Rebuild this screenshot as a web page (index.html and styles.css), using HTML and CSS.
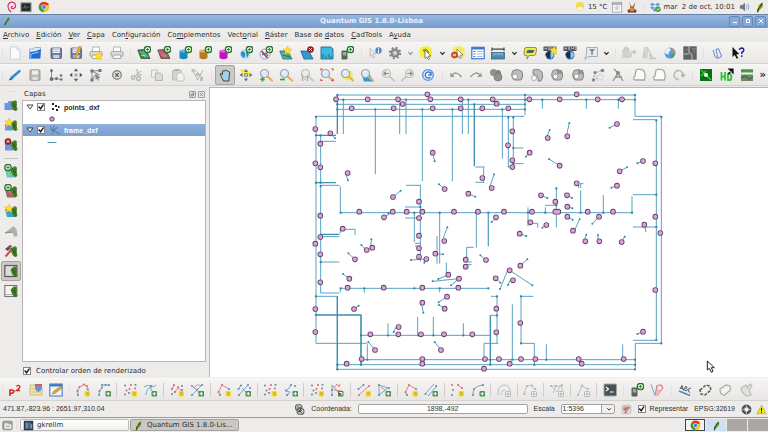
FILE: index.html
```html
<!DOCTYPE html>
<html lang="es">
<head>
<meta charset="utf-8">
<title>Quantum GIS 1.8.0-Lisboa</title>
<link rel="stylesheet" href="styles.css">
</head>
<body>
<svg class="defs" aria-hidden="true">
  <defs>
    <!-- badges -->
    <g id="plus"><circle cx="10.5" cy="3.5" r="3.2" fill="#e9f5e4" stroke="#2b702c" stroke-width="1.3"/><path d="M10.5 1.8v3.4M8.8 3.5h3.4" stroke="#3a8f3c" stroke-width="1.1"/></g>
    <g id="star"><path d="M7 0l1.3 2.9 3.2.3-2.4 2.1.8 3.1L7 6.8 4.1 8.4l.8-3.1L2.500 3.200l3.200-.3z" fill="#fde12a" stroke="#e3b318" stroke-width=".5"/></g>
    <g id="kill"><circle cx="10.5" cy="3.5" r="3.3" fill="#9a1c1c"/><path d="M9.200 2.200l2.600 2.600M11.800 2.200L9.200 4.800" stroke="#fff" stroke-width="1"/></g>
    <g id="bs"><rect x="8.5" y="8" width="5.500" height="5.500" rx="1" fill="#f4dd25"/><path d="M12.500 9.500h-2v1.300h2v1.400h-2.200" fill="none" stroke="#c9a812" stroke-width=".8"/></g>
    <g id="bp"><rect x="8.5" y="8" width="5.500" height="5.500" rx="1" fill="#4b8f54"/><path d="M11.250 9v3.500M9.500 10.750H13" stroke="#fff" stroke-width="1"/></g>
    <g id="bg"><rect x="8.5" y="8.500" width="5" height="5" rx="1" fill="#f0f0ee" stroke="#aaa" stroke-width=".8"/><path d="M11 9.700v2.600M9.700 11h2.600" stroke="#999" stroke-width=".8"/></g>
    <g id="leaf"><path d="M9 3q3-2 4 1l-.5 3 1 5q-3 2-5-1L6.500 6z" fill="#4a842c"/><path d="M8 4l4 9M11 4l-1 5M12.500 6l-2 4" stroke="#2c5a1a" stroke-width=".8"/></g>
    <g id="lens"><path d="M8.500 8.500l4.500 4" stroke="#e3ad5c" stroke-width="2.200" stroke-linecap="round"/><circle cx="5.500" cy="5.500" r="4" fill="#dfe9f3" stroke="#98a4b2" stroke-width="1.200"/><path d="M3.500 5q.5-2 2.500-2" stroke="#fff" fill="none"/></g>
    <g id="lensg"><path d="M8.500 8.500l4.500 4" stroke="#c9c8c5" stroke-width="2" stroke-linecap="round"/><circle cx="5.500" cy="5.500" r="4" fill="#ececea" stroke="#bdbcb9" stroke-width="1.200"/></g>

    <!-- desktop -->
    <symbol id="debian" viewBox="0 0 14 14"><path d="M8 6.500q-2-.5-1.800 1.200Q6.700 9.500 9 8.800 11.800 7.500 11 4.500 9.800 1.200 6.500 1.300 2.500 2 2.300 6.500q.3 4 3.700 6.500" fill="none" stroke="#d7346b" stroke-width="1.400"/></symbol>
    <symbol id="term" viewBox="0 0 14 14"><rect x=".5" y="1.500" width="13" height="11.500" fill="#8d8f8c"/><rect x="1.800" y="2.800" width="10.400" height="8.700" fill="#1f2a26"/><path d="M3 8h2l.8-3L7 9l1-2h3" stroke="#79907f" stroke-width=".7" fill="none"/></symbol>
    <symbol id="chrome" viewBox="0 0 14 14"><circle cx="7" cy="7" r="6.200" fill="#f2c51d"/><path d="M7 7L1.600 3.900A6.200 6.200 0 0 1 12.400 3.900z" fill="#dc3b2b"/><path d="M7 7L1.600 3.900A6.200 6.200 0 0 0 6.500 13.200z" fill="#35a04a"/><path d="M4 2.500h8l.4 1.800H7z" fill="#dc3b2b"/><circle cx="7" cy="7" r="2.900" fill="#fff"/><circle cx="7" cy="7" r="2.200" fill="#3f7edb"/></symbol>
    <symbol id="weather" viewBox="0 0 14 14"><circle cx="7" cy="6" r="4.800" fill="#f7dc3c"/><path d="M3 9q0-2.500 2.500-2 1-1.500 3 0 3-.5 3 2.500-1 2-4 2Q3 11.500 3 9z" fill="#f4f4f0" stroke="#d3cfae" stroke-width=".6"/></symbol>
    <symbol id="cal" viewBox="0 0 14 14"><rect x="1.500" y="1.500" width="11" height="11.500" fill="#f4f6f8" stroke="#8a939c" stroke-width=".8"/><path d="M1.500 3.500h11" stroke="#8a939c" stroke-width="1.500"/><path d="M4 10l6-4M7 5v6M4 7l5 3" stroke="#a8b4c0" stroke-width=".8"/></symbol>
    <symbol id="gnu" viewBox="0 0 14 14"><path d="M4 1l2 5h2l3-5-1.500 6 .5 4H4l1-4z" fill="#9b6a3c"/><path d="M2 10h10v3.500H2z" fill="#6c4124"/><path d="M5.500 8h3l1 4h-5z" fill="#e5884a"/></symbol>
    <symbol id="dropbox" viewBox="0 0 14 14"><path d="M4 2l3 2-3 2-3-2zM10 2l3 2-3 2-3-2zM4 6l3 2-3 2-3-2zM10 6l3 2-3 2-3-2zM7 8.500l3 2-3 2-3-2z" fill="#5aa3dc"/><circle cx="10.500" cy="9.500" r="3.200" fill="#3fa148"/><path d="M9 9.500l1.200 1.200 2-2.400" fill="none" stroke="#fff"/></symbol>
    <symbol id="sound" viewBox="0 0 14 14"><path d="M1 5h2.500L7 2v10L3.500 9H1z" fill="#777"/><path d="M8.500 4.500q1.500 2.500 0 5M10.300 3q2.500 4 0 8" stroke="#7fa3cc" fill="none"/></symbol>
    <symbol id="qgis" viewBox="0 0 14 14"><path d="M4 13Q3 6 10 1.500q1.500 5-2 7.500-2 1-3 4z" fill="#6c9a2c"/><path d="M4 13q1-6 5.500-10" stroke="#274b14" stroke-width="1.300" fill="none"/><path d="M6 4l-1 4" stroke="#e5c72e" stroke-width="1.200"/></symbol>

    <!-- file -->
    <symbol id="new" viewBox="0 0 14 14"><path d="M2.500.8h6.500l3 3v9.400h-9.500z" fill="#fbfbfd" stroke="#c6c8d4" stroke-width=".8"/><path d="M9 .8v3h3" fill="#dfe2ec" stroke="#c6c8d4" stroke-width=".7"/></symbol>
    <symbol id="open" viewBox="0 0 14 14"><path d="M1.500 5V3h4l1-1.500h6V12h-11z" fill="#dce9f7" stroke="#7aa2d6" stroke-width=".7"/><path d="M1.500 12.500l.5-6.500 6-1 5-2-1 9.500z" fill="#1f6ad6"/><path d="M2.500 12l.5-4 8-2" stroke="#8fc2f5" stroke-width="1.200" fill="none"/></symbol>
    <symbol id="save" viewBox="0 0 14 14"><rect x="2" y="2" width="10.500" height="10.500" rx="1" fill="#6b7ba4" stroke="#4b577a" stroke-width=".8"/><path d="M3.500 2.300h7.500v4.700H3.500z" fill="#eef0f5"/><path d="M3.800 3.800h7M3.800 5.500h7" stroke="#aab3c7" stroke-width=".7"/><path d="M4.300 9h6v3.300h-6z" fill="#ccd2de"/></symbol>
    <symbol id="saveas" viewBox="0 0 14 14"><use href="#save"/><path d="M10.500 0l2 1-5 10-2 1.500.3-2.500z" fill="#f4b32c" stroke="#a36b13" stroke-width=".5"/></symbol>
    <symbol id="print" viewBox="0 0 14 14"><path d="M3.500 6V1h7v5" fill="#fff" stroke="#a5a5a5" stroke-width=".8"/><rect x="1" y="5.500" width="12" height="5" rx="1.500" fill="#dcdcda" stroke="#979795" stroke-width=".8"/><path d="M3.200 9h7.600v3.500H3.200z" fill="#f7f7f7" stroke="#8b8b8b" stroke-width=".7"/></symbol>
    <symbol id="printnew" viewBox="0 0 14 14"><use href="#print"/><use href="#star" x="2.500" y="5.500"/></symbol>

    <!-- layers -->
    <symbol id="addvec" viewBox="0 0 14 14"><path d="M.8 4l8-.5 4.200 9H4z" fill="#3f8a3a" stroke="#33503a" stroke-width=".8"/><path d="M2.500 5.500l4 2 1.500 4M6 5l5 6.500" stroke="#4fb8e0" stroke-width="1.200" fill="none"/><path d="M4 9l5 1" stroke="#d7e64c"/><use href="#plus"/></symbol>
    <symbol id="addras" viewBox="0 0 14 14"><path d="M.8 4l8-.5 4.200 9H4z" fill="#a25a5a" stroke="#5b4040" stroke-width=".8"/><path d="M2 5l6 7M4 4.500l6 7" stroke="#e85a7e" stroke-width="1.200"/><path d="M4 9l6 1" stroke="#61b26d" stroke-width="1.300"/><use href="#plus"/></symbol>
    <symbol id="addpg" viewBox="0 0 14 14"><path d="M1.500 5v7q4 2.500 8 0V5z" fill="#1d86c2"/><ellipse cx="5.500" cy="5" rx="4" ry="1.500" fill="#5fb6e2"/><use href="#plus"/></symbol>
    <symbol id="addsl" viewBox="0 0 14 14"><path d="M1.500 5v7q4 2.500 8 0V5z" fill="#b87a1c"/><ellipse cx="5.500" cy="5" rx="4" ry="1.500" fill="#e3ad52"/><use href="#plus"/></symbol>
    <symbol id="addms" viewBox="0 0 14 14"><path d="M1.500 5v7q4 2.500 8 0V5z" fill="#c012c4"/><ellipse cx="5.500" cy="5" rx="4" ry="1.500" fill="#e75eea"/><use href="#plus"/></symbol>
    <symbol id="addwms" viewBox="0 0 14 14"><circle cx="6" cy="8" r="5" fill="#b9dcf2"/><path d="M2 6q3-2 4 1t-1 5q-4-2-3-6z" fill="#2f8fd0"/><path d="M7 6l3 2-2 4z" fill="#2a7dbc"/><use href="#plus"/></symbol>
    <symbol id="addwfs" viewBox="0 0 14 14"><circle cx="6" cy="8" r="5" fill="#eef2fb" stroke="#8c8fd0" stroke-width=".8"/><path d="M2.500 5l6 7" stroke="#dd2d2d" stroke-width="1.800"/><path d="M3 9l4-2 2 3" stroke="#4164c9" stroke-width="1.200" fill="none"/><use href="#plus"/></symbol>
    <symbol id="newshp" viewBox="0 0 14 14"><path d="M.8 5h8l4.200 8H4z" fill="#45b3c0" stroke="#2a6a5a" stroke-width=".8"/><path d="M4 9l7 2" stroke="#2f8a34" stroke-width="1.500"/><use href="#star" x="1.500"/></symbol>
    <symbol id="dellay" viewBox="0 0 14 14"><path d="M.8 5h8l4.200 8H4z" fill="#2b9bd0" stroke="#1f5f85" stroke-width=".8"/><use href="#kill"/></symbol>
    <symbol id="gps" viewBox="0 0 14 14"><path d="M1 1h10l2 2v10H1z" fill="#3cbbe2" stroke="#2a6a84" stroke-width=".9"/><path d="M3 8v4M6 9.500v3M9 8v4M11 10v3" stroke="#1c617d" stroke-width=".9"/></symbol>
    <symbol id="addgps" viewBox="0 0 14 14"><rect x="1.500" y="4.500" width="6" height="9" rx="1" fill="#5a615c"/><rect x="2.800" y="6" width="3.400" height="3.500" fill="#8ab58d"/><use href="#plus"/></symbol>

    <!-- attributes -->
    <symbol id="ident" viewBox="0 0 14 14"><path d="M2 2l6 6-3 .3 1.600 3-1.500.8L3.500 9 2 10.500z" fill="#e5e5e3" stroke="#aaa" stroke-width=".6"/><circle cx="10.500" cy="4.500" r="3.200" fill="#4d88cc"/><path d="M10.500 4v3M10.500 2.200v1" stroke="#fff" stroke-width="1.200"/></symbol>
    <symbol id="gear" viewBox="0 0 14 14"><circle cx="7" cy="7" r="4" fill="#9d9d9b" stroke="#7a7a78" stroke-width="1"/><circle cx="7" cy="7" r="5.200" fill="none" stroke="#858585" stroke-width="2" stroke-dasharray="2 2.080"/><circle cx="7" cy="7" r="1.500" fill="#eceae8"/></symbol>
    <symbol id="chev" viewBox="0 0 8 14"><path d="M1.500 6l2.500 2.500L6.500 6" fill="none" stroke="currentColor" stroke-width="1.400"/></symbol>
    <symbol id="select" viewBox="0 0 14 14"><path d="M1 2q6-4 11 0 2 5 0 9-6 3-11-1-1-4 0-8z" fill="#f5ee3d"/><path d="M4 4l3-1 3 3-3 2z" fill="#b9b88c" stroke="#77774c" stroke-width=".8"/><path d="M6 4l6 6-3 .2 1.500 2.500-1.300.8L7.700 11 6 12.300z" fill="#fff" stroke="#666" stroke-width=".8"/></symbol>
    <symbol id="desel" viewBox="0 0 14 14"><path d="M2 2q6-4 11 0 1.500 5 0 9-6 3-11-1-1-4 0-8z" fill="#f5ee5a"/><path d="M6 3l6 6-3 .2 1.500 2.500-1.300.8L7.700 10 6 11.300z" fill="#fff" stroke="#777" stroke-width=".8"/><circle cx="3.500" cy="9" r="3" fill="#e3581e" stroke="#b02b14" stroke-width=".8"/><path d="M2 9h3" stroke="#fff" stroke-width="1.200"/></symbol>
    <symbol id="table" viewBox="0 0 14 14"><rect x=".8" y="1.300" width="12.400" height="11.400" fill="#fff" stroke="#3c77d0" stroke-width="1.200"/><path d="M1 2.500h12" stroke="#3c77d0" stroke-width="2"/><path d="M2.500 5.500h2M2.500 8h2M2.500 10.500h2" stroke="#3c77d0" stroke-width="1.200"/><path d="M6 5.500h5.500M6 8h5.500M6 10.500h5.500" stroke="#9ab1d8" stroke-width=".9"/></symbol>
    <symbol id="measure" viewBox="0 0 14 14"><path d="M1 1.500v3.500M13 1.500v3.500M1 3.200h12" stroke="#444" stroke-width="1.200"/><rect x=".5" y="6.500" width="13" height="6.500" fill="#4b89ae" stroke="#2e5a78" stroke-width=".7"/><path d="M3 7v2.500M5 7v2M7 7v2.500M9 7v2M11 7v2.500" stroke="#d4e6f0" stroke-width=".7"/></symbol>
    <symbol id="tip" viewBox="0 0 14 14"><path d="M3 1.500h9q2 0 1.500 2.500l-.8 4q-.5 1.500-2 1.500H6l-2 3.500V9.500H2.500Q.8 9.500 1 8l.5-4.500Q1.700 1.500 3 1.500z" fill="#f2ea55" stroke="#7c7940" stroke-width=".8"/><path d="M4.500 4h7l-1.500 3H3.300z" fill="#3f6f48"/></symbol>
    <symbol id="bm" viewBox="0 0 14 14"><path d="M.5.5h13v4.500H.5z" fill="#4d5053"/><path d="M2 1.500v2M2 2.500h1.500M3.500 1.500v2M5.500 1.500h1.300v2H5.500zM8.500 3.500v-2l1 1 1-1v2M13 1.500h-1v2h1" stroke="#ddd" stroke-width=".6" fill="none"/><circle cx="7" cy="9" r="4.500" fill="#3f7db8"/><path d="M7 5v8q-3.500-1-4.500-4.500 1-3 4.500-3.500z" fill="#1d2f47"/><path d="M8 6q3.500 1 2.500 4l-2.500 2.500z" fill="#a9c6dc"/></symbol>
    <symbol id="bmnew" viewBox="0 0 14 14"><use href="#bm"/><use href="#star" x="4"/></symbol>
    <symbol id="text" viewBox="0 0 14 14"><path d="M2.500 1.500h11v9H5L.8 13.200l1.700-5z" fill="#e4ebf1" stroke="#9aa8b4" stroke-width=".9"/><path d="M5.500 3.800h5M8 3.800v5" stroke="#5e6b77" stroke-width="1.300"/></symbol>
    <symbol id="g1" viewBox="0 0 14 14"><path d="M1 12V5l2-3v10M5 12V1l2 4v7M9 6h4M11.500 4l2 2-2 2M9 11V7" stroke="#c3c2bf" stroke-width="1.300" fill="none"/></symbol>
    <symbol id="g2" viewBox="0 0 14 14"><path d="M1 12.500L3 1v11.500M5 12V1l6 11.500M8 6v6.500h6" stroke="#c9c8c5" stroke-width="1.300" fill="none"/></symbol>
    <symbol id="globe" viewBox="0 0 14 14"><circle cx="7" cy="7" r="5.500" fill="#5a9be6"/><path d="M3 2.800q4-2 5 1.500Q5 6 6 8q-3 1-4.700-2z" fill="#e9f0dc"/><path d="M8 8l4 .5-3 4q-2-1-1-4.500z" fill="#5d9c3d"/><path d="M9 1.800l3.500 4-3-.5z" fill="#e58b2b"/></symbol>
    <symbol id="sat" viewBox="0 0 14 14"><rect x=".3" y=".3" width="13.400" height="13.400" fill="#5f6263"/><path d="M6 0v6l3 3v5M0 8h6" stroke="#9ea2a2" stroke-width="1.600" fill="none"/><path d="M9 3h5" stroke="#858989" stroke-width="1.500"/><path d="M10.500 6h1.500M3 3.500h1.500" stroke="#d6685f" stroke-width="1.500"/></symbol>
    <symbol id="clip" viewBox="0 0 14 14"><path d="M3 4l2 6.500q1 1.500 2.500 0L6 3.500 8.500 3l3 7q-1.500 2.500-5 2" fill="none" stroke="#7096d3" stroke-width="1.100"/></symbol>
    <symbol id="help" viewBox="0 0 14 14"><path d="M1.500 1v10l2.200-2 2 3.800 1.500-.8-2-3.500 3-.5z" fill="#111"/><path d="M8.500 4q.2-2 2.300-2 2 .2 2 2 0 1.300-2 2.500v1.500M10.800 9.300v1.700" stroke="#26269a" stroke-width="1.500" fill="none"/></symbol>

    <!-- editing -->
    <symbol id="pen" viewBox="0 0 14 14"><path d="M1 12l2-3.500L11.500 1.500l1.500 2-8 7z" fill="#2f8fd8"/><path d="M1 12l4-1.500" stroke="#14568e"/></symbol>
    <symbol id="saveg" viewBox="0 0 14 14"><rect x="2" y="1.800" width="10" height="10.500" rx="1" fill="#bcbbb8" stroke="#8c8b88" stroke-width=".8"/><path d="M4 2.500h6v4H4z" fill="#eeedeb"/><path d="M4.500 9h5v3h-5z" fill="#e0dfdc"/></symbol>
    <symbol id="addln" viewBox="0 0 14 14"><path d="M2.500 2.500v9l5-1 5 1" fill="none" stroke="#888" stroke-width="1"/><g fill="#737373"><circle cx="2.500" cy="2.500" r="1.500"/><circle cx="2.500" cy="11" r="1.900"/><circle cx="7.500" cy="10.500" r="1.500"/><circle cx="12" cy="7.500" r="1.300"/><circle cx="12.300" cy="11.500" r="1.300"/></g></symbol>
    <symbol id="move" viewBox="0 0 14 14"><path d="M7 .5l2.200 2.800H4.800zM7 13.500l2.200-2.800H4.800zM.5 7l2.800-2.200v4.400zM13.500 7l-2.800-2.200v4.400z" fill="#555"/><rect x="5.500" y="5.500" width="3" height="3" rx="1" fill="#a5a5a5"/></symbol>
    <symbol id="node" viewBox="0 0 14 14"><path d="M3 12V3l8-.5M3 3l8 4M3 12l4-6" fill="none" stroke="#888" stroke-width="1"/><g fill="#737373"><rect x="1.500" y="1.500" width="3" height="3"/><rect x="9.500" y="1" width="3" height="3"/><rect x="1.500" y="10.500" width="3" height="3"/></g><path d="M6.500 5l5 5-2.300.2 1 2-1 .6-1-2-1.700 1z" fill="#888"/></symbol>
    <symbol id="del" viewBox="0 0 14 14"><circle cx="7" cy="7" r="4.300" fill="#e3e2e0" stroke="#8a8a88" stroke-width="1.400"/><path d="M5.300 5.300l3.400 3.400M8.700 5.300L5.300 8.700" stroke="#666" stroke-width="1.400"/></symbol>
    <symbol id="cut" viewBox="0 0 14 14"><path d="M7 1l1 7M11 3L4 9M12 7H7" stroke="#c3c2bf" stroke-width="1.500"/><g fill="none" stroke="#b1b0ad" stroke-width="1.200"><circle cx="3.200" cy="9.500" r="1.700"/><circle cx="8.500" cy="10.500" r="1.900"/></g></symbol>
    <symbol id="copy" viewBox="0 0 14 14"><path d="M1.500 2h6v7h-6z" fill="#efeeec" stroke="#c2c1be" stroke-width=".9"/><path d="M5.500 5h5l2 2v5.500h-7z" fill="#dddcd9" stroke="#b1b0ad" stroke-width=".9"/></symbol>
    <symbol id="paste" viewBox="0 0 14 14"><rect x="1.500" y="2" width="9" height="10" rx="1" fill="#d5d4d1" stroke="#b5b4b1" stroke-width=".9"/><path d="M4 1h4v2H4z" fill="#b0afac"/><path d="M6 5h5l2 2v6H6z" fill="#f3f2f0" stroke="#bdbcb9" stroke-width=".8"/></symbol>
    <symbol id="vg" viewBox="0 0 14 14"><path d="M1.500 2l5 10L12 2M4 2l8 8" fill="none" stroke="#b5b4b1" stroke-width="1"/><g fill="#bfbebb"><rect x=".5" y="1" width="3" height="3"/><rect x="5" y="5" width="3" height="3"/><rect x="9" y="9" width="3" height="4"/></g></symbol>
    <symbol id="hand" viewBox="0 0 14 14"><path d="M3 8l-1-2q1-1 2.500.5L4.500 3q1-1 1.800.2Q7 1.300 8.200 2.800 9.500 2 10 3.500q1.500-.3 1.700 1.300L11 10v3H5.500z" fill="#9ed2ee" stroke="#333" stroke-width=".9"/></symbol>
    <symbol id="panfeat" viewBox="0 0 14 14"><path d="M1 1h6l5 4-3 5-6-2z" fill="#f7ec4a"/><path d="M7 1l2 3H5zM7 13.500l2-3H5zM.5 7l3-2v4zM13.500 7l-3-2v4z" fill="#4a6f9c"/><rect x="5.700" y="5.700" width="2.600" height="2.600" fill="#dfe7ee" stroke="#4a6f9c" stroke-width=".8"/></symbol>
    <symbol id="zin" viewBox="0 0 14 14"><use href="#lens"/><path d="M3.500 9.300v4.200M1.400 11.400h4.200" stroke="#35a336" stroke-width="1.600"/></symbol>
    <symbol id="zout" viewBox="0 0 14 14"><use href="#lens"/><path d="M1 11.500h5" stroke="#35a336" stroke-width="1.700"/></symbol>
    <symbol id="z11" viewBox="0 0 14 14"><use href="#lensg"/><path d="M2.500 6.500v6.500M5 8.500v1M5 11v1M7.500 7v6" stroke="#afaeab" stroke-width="1.400"/></symbol>
    <symbol id="zfull" viewBox="0 0 14 14"><use href="#lens"/><path d="M.5 3V.5H3zM13.500 3V.5H11zM.5 10.500V13H3zM13.500 10.500V13H11z" fill="#e02d2d"/></symbol>
    <symbol id="zsel" viewBox="0 0 14 14"><path d="M3 3h9l1 7-6 3-5-4z" fill="#f7ec4a"/><use href="#lens"/></symbol>
    <symbol id="zlay" viewBox="0 0 14 14"><path d="M1.500 6h8l4 7.500H4z" fill="#2b9bd0"/><use href="#lens"/></symbol>
    <symbol id="zprev" viewBox="0 0 14 14"><use href="#lensg"/><path d="M8 5.500H3.500M5 3.500l-2 2 2 2" stroke="#8b8a88" fill="none" stroke-width="1.100"/></symbol>
    <symbol id="znext" viewBox="0 0 14 14"><g transform="matrix(-1 0 0 1 14 0)"><use href="#lensg"/></g><path d="M6 5.500h4.500M9 3.500l2 2-2 2" stroke="#8b8a88" fill="none" stroke-width="1.100"/></symbol>
    <symbol id="refresh" viewBox="0 0 14 14"><circle cx="7" cy="7" r="5.300" fill="#fff" stroke="#6398e6" stroke-width="1.500"/><path d="M9.800 5.500A3 3 0 1 0 9.500 9M7 7h3V4" fill="none" stroke="#3b78d8" stroke-width="1.500"/></symbol>
    <symbol id="undo" viewBox="0 0 14 14"><path d="M2.500 7.500Q7 2 12.500 9" fill="none" stroke="#999896" stroke-width="1.500"/><path d="M1.300 4.500v4.500h4.500z" fill="#999896"/></symbol>
    <symbol id="redo" viewBox="0 0 14 14"><path d="M11.500 7.500Q7 2 1.500 9" fill="none" stroke="#999896" stroke-width="1.500"/><path d="M12.700 4.500v4.500h-4.500z" fill="#999896"/></symbol>
    <symbol id="simp" viewBox="0 0 14 14"><circle cx="4.500" cy="4.500" r="3.500" fill="#92918f"/><circle cx="9" cy="5" r="3" fill="#858482"/><circle cx="9" cy="9" r="4" fill="#92918f" stroke="#7a7977" stroke-width=".8"/></symbol>
    <symbol id="ring" viewBox="0 0 14 14"><path d="M3 2.500q5-2.500 9 1 2 5-1 8.500H4Q0 8 3 2.500z" fill="#bdbcba" stroke="#858482" stroke-width="1"/><circle cx="5" cy="8.500" r="2.500" fill="#fff" stroke="#888" stroke-width=".7"/></symbol>
    <symbol id="part" viewBox="0 0 14 14"><path d="M3 2q6-2 9 2 2 5-1 9H8q1-6-5-7z" fill="#bdbcba" stroke="#858482" stroke-width="1"/><circle cx="4" cy="10" r="2.500" fill="#fff" stroke="#888" stroke-width=".7"/></symbol>
    <symbol id="delring" viewBox="0 0 14 14"><path d="M3 2.500q5-2.500 9 1 2 5-1 8.500H4Q0 8 3 2.500z" fill="#bdbcba" stroke="#858482" stroke-width="1"/><path d="M7 2h5v4H7z" fill="#92918f"/><circle cx="5.500" cy="8.500" r="2.300" fill="#fff" stroke="#888" stroke-width=".7"/></symbol>
    <symbol id="reshape" viewBox="0 0 14 14"><path d="M2 12l2-7 8-3M2 12l6-3" stroke="#999" stroke-dasharray="2 1" fill="none"/><g fill="#858482"><circle cx="2.500" cy="12" r="1.600"/><circle cx="4" cy="4.500" r="1.600"/><circle cx="11.500" cy="2.500" r="1.800"/></g><path d="M9 5l1.200 2.500 2.800.3-2 2 .5 2.700L9 11.200l-2.500 1.300.5-2.700-2-2 2.800-.3z" fill="#efeeec" stroke="#c5c5c5" stroke-width=".7"/></symbol>
    <symbol id="split" viewBox="0 0 14 14"><path d="M3 1l4 4-5 8M7 5l5 8M4 9h7" stroke="#92918f" stroke-width="1.400" fill="none"/><circle cx="7" cy="5" r="2" fill="#8a8987"/></symbol>
    <symbol id="merge" viewBox="0 0 14 14"><path d="M4 2q5-2 8 1 2 4 .5 9H3Q0 10 3 8z" fill="#fbfbfa" stroke="#a9a8a6" stroke-width="1.300"/></symbol>
    <symbol id="rot" viewBox="0 0 14 14"><path d="M11 8A4.500 4.500 0 1 0 7 11.500" fill="none" stroke="#bfbebc" stroke-width="1.800"/><path d="M8.500 6.500h5L11 10z" fill="#afaeac"/></symbol>
    <symbol id="ras1" viewBox="0 0 14 14"><rect x="1" y="1" width="12" height="12" fill="#0b6d15"/><path d="M2 2l10 10M2 8l5-5" stroke="#1fd12c" stroke-width="1.600"/><circle cx="7" cy="7" r="2" fill="#fff"/></symbol>
    <symbol id="ras2" viewBox="0 0 14 14"><path d="M1.500 4v8.500M5 4v8.500M1.500 8.500H5M8 6v6h2.500q2-3 0-6z" stroke="#2fc437" stroke-width="1.800" fill="none"/><path d="M8 6l4-4M9 1h4v4z" stroke="#111" fill="#111" stroke-width="1.200"/></symbol>
    <symbol id="ras3" viewBox="0 0 14 14"><path d="M1 1.500h12V13H1z" fill="#6d8a63"/><path d="M1 1.500h12v2H1z" fill="#3e9a3c"/><path d="M1 4.500h12v2H1z" fill="#e9efe4"/><path d="M1 10l4-2 4 3 4-2" stroke="#4d634a" stroke-width="1.300" fill="none"/></symbol>

    <!-- side bar -->
    <symbol id="s-old" viewBox="0 0 14 14"><path d="M.5 12V5h3l1-2h5v9z" fill="#6a96e3"/><use href="#leaf"/></symbol>
    <symbol id="s-new" viewBox="0 0 14 14"><path d="M1 12.500V6h8v6.500z" fill="#6a96e3"/><use href="#leaf"/><use href="#star" x="-2"/></symbol>
    <symbol id="s-del" viewBox="0 0 14 14"><path d="M1 12.500V5h8v7.500z" fill="#6a96e3"/><use href="#leaf"/><use href="#kill" x="-6.500"/></symbol>
    <symbol id="s-addv" viewBox="0 0 14 14"><path d="M1 5h8l3 8.500H3z" fill="#58c4cf"/><path d="M3 7l3 5" stroke="#8bd94a" stroke-width="1.500"/><use href="#leaf"/><use href="#plus" x="-6.500"/></symbol>
    <symbol id="s-addr" viewBox="0 0 14 14"><path d="M1 5h8l3 8.500H3z" fill="#9b6a5a"/><path d="M5 7l3 5" stroke="#e85a7e" stroke-width="2"/><use href="#leaf"/><use href="#plus" x="-6.500"/></symbol>
    <symbol id="s-star" viewBox="0 0 14 14"><path d="M1 5h8l3 8H3z" fill="#2fa9cb"/><use href="#leaf"/><use href="#star" x="-2"/></symbol>
    <symbol id="s-edit" viewBox="0 0 14 14"><path d="M.5 9l9-7 3 3 1 7-3 1-2-4z" fill="#b1b0ae"/><path d="M1 9l7-1" stroke="#888"/></symbol>
    <symbol id="s-tool" viewBox="0 0 14 14"><path d="M1 5l5-4 2 1-4 5z" fill="#4a4f55"/><path d="M1.500 12.500L9 4M5 3l7 8" stroke="#d44a45" stroke-width="2"/><use href="#leaf"/></symbol>
    <symbol id="s-reg" viewBox="0 0 14 14"><rect x=".8" y="1.500" width="12" height="11" fill="#dcdbd8" stroke="#5a5a58" stroke-width="1.200"/><use href="#leaf"/></symbol>
    <symbol id="s-reg2" viewBox="0 0 14 14"><rect x=".8" y="1.500" width="12" height="11" fill="#f5f5f4" stroke="#777775" stroke-width="1.100"/><path d="M1 10.500h12" stroke="#999" stroke-width=".8"/><use href="#leaf"/></symbol>

    <!-- cad -->
    <symbol id="p2" viewBox="0 0 14 14"><path d="M2 13V7h1.500q2.200 0 2.200 1.500T3.500 10.300H2" fill="none" stroke="#e02020" stroke-width="1.600"/><path d="M8.500 3.500q1.500-2 3-.5T8.500 7.500H12" fill="none" stroke="#e02020" stroke-width="1.400"/></symbol>
    <symbol id="geo" viewBox="0 0 14 14"><path d="M1 2h8l4 2v8H1z" fill="#efe3b0" stroke="#b9a768" stroke-width=".7"/><path d="M2 6h10M3 9h9" stroke="#e3bd66" stroke-width="1.200"/><path d="M6 1h7v4q-1 3-3.500 4Q6.500 8 6 5z" fill="#6c93cc"/><path d="M6 1h7v2H6z" fill="#d25c5c"/></symbol>
    <symbol id="form" viewBox="0 0 14 14"><rect x=".8" y="1" width="12.400" height="12" fill="#eef4fb" stroke="#3d77bd" stroke-width="1"/><path d="M1 2.300h12" stroke="#3d77bd" stroke-width="2.300"/><path d="M3 11l2-3 7-5 1.500 1.500-7 5.500z" fill="#eaa73a" stroke="#8a5c18" stroke-width=".5"/></symbol>
    <symbol id="c1" viewBox="0 0 14 14"><path d="M2 12L1.500 8 3.500 4 8 1.500 11 3v4" class="r"/><path d="M3.500 4h0M8 1.500h0M11 3h0" class="rd"/><path d="M2 12h0M1.500 8h0M12 6.500h0" class="bd"/><use href="#bs"/></symbol>
    <symbol id="c2" viewBox="0 0 14 14"><path d="M2 12l.5-4L5 4.500M5 2h7" class="b"/><path d="M2 12h0M2.500 8h0M5 4.500h0M5 2h0M8.500 2h0M12 2h0" class="bd"/><use href="#bp"/></symbol>
    <symbol id="c3" viewBox="0 0 14 14"><path d="M6.500 6h0M8 2h0M3.500 7.500h0M12 5.500h0" class="rd"/><path d="M2 2.500h0M12.500 1.800h0M2 11.500h0M6 10h0" class="bd"/><use href="#bs"/></symbol>
    <symbol id="c4" viewBox="0 0 14 14"><path d="M1 4q4-3 7-1t5-1M3 12Q3 5 10 3M8 3v5" class="b"/><path d="M8 3h0" class="bd"/><use href="#bp"/></symbol>
    <symbol id="c5" viewBox="0 0 14 14"><path d="M2 6l2-3.500M4 10l4-5 4 3" class="r"/><path d="M2 6h0M8 4h0M4 2h0" class="rd"/><path d="M2 11h0M12 3h0M12 7h0M5 9h0" class="bd"/><use href="#bs"/></symbol>
    <symbol id="c6" viewBox="0 0 14 14"><path d="M4 5q3-5 7-2" class="r"/><path d="M2 12L12 2M2 3l8 7" class="b"/><path d="M2 12h0M12 2h0M2 3h0" class="bd"/><path d="M7 6.500h0" class="rd"/><use href="#bp"/></symbol>
    <symbol id="c7" viewBox="0 0 14 14"><path d="M3 12L1.500 9 5 2l7 4" class="r"/><path d="M5 2h0M1.500 9h0" class="rd"/><path d="M12 6h0M3 12h0" class="bd"/><use href="#bs"/></symbol>
    <symbol id="c8" viewBox="0 0 14 14"><path d="M2 12L11 2M1.500 6l2-3M5 5l4 4" class="b"/><path d="M2 12h0M11 2h0M1.500 6h0M13 5h0M4 2.500h0" class="bd"/><use href="#bp"/></symbol>
    <symbol id="c9" viewBox="0 0 14 14"><path d="M5 5l-3 3 4 1-3 4M7 2L5 5" class="b"/><path d="M7 2h0M2 7.500h0M11 3h0M3 12h0" class="bd"/><use href="#bp"/></symbol>
    <symbol id="c10" viewBox="0 0 14 14"><path d="M2 13V2l5 6 4 2" class="b"/><path d="M4 5l3-4 2 3 1-3M4 7l8 1" class="r"/><path d="M2 12h0M2 7h0" class="bd"/><rect x="8" y="8" width="5.500" height="5.500" rx="1" fill="#4b8056"/><path d="M9.500 9.500h2.500v3" stroke="#fff" fill="none"/></symbol>
    <symbol id="c11" viewBox="0 0 14 14"><path d="M1.500 6l5-4" class="b"/><path d="M2 12l10-9" class="r"/><path d="M1.500 6h0M6.500 2h0" class="bd"/><path d="M2 12h0M12 3h0" class="rd"/><use href="#bs"/></symbol>
    <symbol id="c12" viewBox="0 0 14 14"><path d="M2 12V2l9 3L2 12" class="b"/><path d="M4 4l4 3" class="r"/><path d="M2 12h0M2 2h0M12 5h0" class="bd"/><use href="#bp"/></symbol>
    <symbol id="c13" viewBox="0 0 14 14"><path d="M1 11L10 1M4 13l9-10" class="b"/><path d="M12 3h0M1.500 11h0" class="bd"/><use href="#bp"/></symbol>
    <symbol id="c14" viewBox="0 0 14 14"><path d="M8 2l4 3" class="r"/><path d="M2 2h0M8 2h0M3 7h0M12 5h0" class="rd"/><path d="M2 12h0" class="bd"/><use href="#bs"/></symbol>
    <symbol id="c15" viewBox="0 0 14 14"><path d="M2 12Q1 3 12 2" class="b"/><path d="M2 12h0M3 6h0M12 2h0" class="bd"/><use href="#bp"/></symbol>
    <symbol id="k1" viewBox="0 0 14 14"><path d="M1 12Q0 3 7 2q6 0 6 6M4 12q0-5 4-5" class="k"/><use href="#bg"/></symbol>
    <symbol id="k2" viewBox="0 0 14 14"><path d="M1.500 11Q2 3 7 2l5 4" class="k"/><path d="M1.500 11h0M4 3h0M9 2.500h0M12 6h0" class="kd"/><use href="#bg"/></symbol>
    <symbol id="k3" viewBox="0 0 14 14"><path d="M1 3h11v5M1 3l6 6 4-7M3 10l3-7" class="k"/><path d="M1 3h0M12 2h0M6 3h0" class="kd"/><use href="#bg"/></symbol>
    <symbol id="k4" viewBox="0 0 14 14"><path d="M2 12L6 3l6 3" class="k"/><path d="M2 12h0M6 2.500h0M12 6h0" class="kd"/><use href="#bg"/></symbol>
    <symbol id="shell" viewBox="0 0 14 14"><rect x="1" y="1" width="12.500" height="12" rx="1" fill="#4b5357" stroke="#a0a5a5" stroke-width="1"/><path d="M3 4l2.500 2L3 8M7 9h3.500" fill="none" stroke="#fff" stroke-width="1.100"/></symbol>
    <symbol id="vr" viewBox="0 0 14 14"><path d="M1 1.500l4 11L7 2" class="b"/><path d="M7 13V3q5-3 5.500 1T8 8M9 2l4 2-5 8" class="r"/></symbol>
    <symbol id="abc" viewBox="0 0 14 14"><path d="M1 8l11 4.500" stroke="#4b8ad6" stroke-width="1.700"/><path d="M2 6l2-3.500 1.500 5M2.500 5l3 1M6.500 7l1-3.500q2.500.5 1 2 2 1 0 2.500zM13 5.500q-2-1.500-2.500 1T12 9.500" fill="none" stroke="#555" stroke-width="1"/></symbol>
    <symbol id="lab1" viewBox="0 0 14 14"><path d="M2 7l6-5 4 1 1 4-6 5-4-1z" fill="#efeeec" stroke="#5f5f5d" stroke-width="1.600" stroke-dasharray="3 1.300"/></symbol>
    <symbol id="lab2" viewBox="0 0 14 14"><path d="M2 6l6-4 4 1 .5 4L6 12.500 2.500 10z" fill="#f4f3f2" stroke="#a9a8a6" stroke-width="1.200"/></symbol>
    <symbol id="lab3" viewBox="0 0 14 14"><path d="M2 5l5-3 1 3 3-4 2 2-3 4 2 5-5 1-4-4z" fill="#e3e2e0" stroke="#bbbab8" stroke-width="1.200"/></symbol>
    <symbol id="track" viewBox="0 0 14 14"><rect x="2" y="1" width="8" height="7" rx="2" fill="#d9d8d5" stroke="#444" stroke-width="1.200"/><rect x="4" y="6" width="8.500" height="7" rx="2" fill="#d9d8d5" stroke="#444" stroke-width="1.200"/><path d="M4 3q3 3 5 1M5 10l5-2M3 5l8 7M9 6l-3 5" stroke="#333" stroke-width="1.100" fill="none"/></symbol>
    <symbol id="stop" viewBox="0 0 14 14"><rect x="1.500" y="1.500" width="11" height="11" rx="2" fill="#e2e1df" stroke="#aaa9a6" stroke-width=".8"/><path d="M4 11l6-8 1.500 1.500L6 12z" fill="#888"/><circle cx="5.500" cy="6" r="3" fill="#e58f8b"/><path d="M3.500 8l5-4" stroke="#c33" stroke-width="1.200"/></symbol>
    <symbol id="crs" viewBox="0 0 14 14"><circle cx="7" cy="7" r="5.700" fill="#55575a" stroke="#2b2c2e" stroke-width="1"/><circle cx="7" cy="7" r="2.800" fill="#f0f0ef"/><path d="M7 1v3M7 10v3M1 7h3M10 7h3" stroke="#bbb" stroke-width="1.100"/></symbol>
    <symbol id="warn" viewBox="0 0 14 14"><path d="M7 1.500l6 11H1z" fill="#f7e71c" stroke="#b5a312" stroke-width=".8"/><path d="M7 5v4M7 10v1.300" stroke="#222" stroke-width="1.300"/></symbol>
    <symbol id="desk" viewBox="0 0 14 14"><rect x="1" y="1.500" width="12" height="11" rx="1.500" fill="#9aa896" stroke="#7f867a"/><path d="M3 4h4l1 1.500h4V11H3z" fill="#e8eae3"/><path d="M5 8h5" stroke="#8a9a86"/></symbol>
    <symbol id="krell" viewBox="0 0 14 14"><rect x="1" y="1" width="12" height="12" fill="#27384b"/><path d="M3 3h4v8H3z" fill="#6c8cab"/><path d="M9 3v8M11 5v6" stroke="#a9c3d6"/></symbol>
    <symbol id="tri" viewBox="0 0 8 8"><path d="M1 2h6L4 6z" fill="#fff" stroke="#444" stroke-width="1"/></symbol>
    <symbol id="pts" viewBox="0 0 10 10"><g fill="#222"><rect x="2" y="1" width="2" height="2"/><rect x="5" y="3" width="2" height="2"/><rect x="2" y="6" width="2" height="2"/><rect x="6" y="7" width="2" height="2"/><rect x="8" y="4" width="1.500" height="2"/></g></symbol>
    <symbol id="lns" viewBox="0 0 10 10"><path d="M0 1l3 4 3 2 4 2M2 9l2-4V0M3 6l5-4M0 4l3 2" fill="none" stroke="#4c6a90" stroke-width=".8"/></symbol>

    <!-- survey points, in map units -->
    <g id="points">
      <path d="M378 34h0M473 34h0M564 34h0M578 48h0M652 19h0M661 34h0M752 34h0M425 61h0M551 61h0M668 61h0M752 61h0M817 61h0M316 123h0M361 136h0M331 167h0M316 226h0M331 238h0M413 255h0M668 194h0M549 327h0M704 303h0M775 317h0M817 270h0M627 341h0M448 371h0M548 371h0M590 371h0M637 371h0M732 371h0M804 371h0M522 388h0M627 390h0M331 383h0M398 422h0M627 443h0M331 447h0"/>
      <path transform="translate(825 0)" d="M23 34h0M35 47h0M70 61h0M133 34h0M224 34h0M275 19h0M338 34h0M411 34h0M82 130h0M69 172h0M82 217h0M82 237h0M134 194h0M188 150h0M247 145h0M224 233h0M396 108h0M474 219h0M511 226h0M404 250h0M396 293h0M20 300h0M168 322h0M246 322h0M275 286h0M211 341h0M247 356h0M57 371h0M141 371h0M211 371h0M220 371h0M308 371h0M384 371h0M33 388h0M247 386h0M342 386h0M511 386h0M136 403h0M184 411h0M478 410h0M104 437h0M264 428h0M526 435h0"/>
      <path transform="translate(285 426)" d="M31 41h0M46 73h0M46 157h0M31 237h0M31 306h0M150 88h0M185 60h0M202 53h0M342 55h0M342 80h0M364 87h0M391 71h0M418 33h0M482 89h0M482 110h0M543 90h0M430 134h0M462 146h0M133 146h0M128 173h0M236 173h0M352 173h0M460 173h0M426 200h0M419 236h0M352 218h0M147 237h0M281 291h0M196 313h0M280 313h0M348 313h0M417 313h0M502 313h0M210 360h0M408 360h0M170 387h0M352 387h0M540 387h0M125 401h0M352 401h0M537 416h0"/>
      <path transform="translate(825 426)" d="M301 34h0M343 34h0M410 36h0M106 107h0M74 121h0M32 145h0M84 151h0M511 180h0M34 236h0M106 279h0M34 307h0M474 305h0M42 387h0M108 387h0M151 387h0M281 387h0M416 387h0M74 401h0M290 401h0"/>
    </g>
  </defs>
</svg>

<header class="panel">
  <svg class="ic"><use href="#debian"/></svg><svg class="ic"><use href="#term"/></svg><svg class="ic apart"><use href="#chrome"/></svg>
  <div class="tray">
    <svg class="ic"><use href="#weather"/></svg><span>15 °C</span>
    <svg class="ic"><use href="#cal"/></svg><svg class="ic"><use href="#gnu"/></svg><i class="grip"></i>
    <svg class="ic"><use href="#dropbox"/></svg><time>mar&nbsp; 2 de oct, 10:01</time>
    <svg class="ic"><use href="#sound"/></svg><svg class="ic"><use href="#qgis"/></svg>
  </div>
</header>

<div class="title">
  <svg class="ic"><use href="#qgis"/></svg>
  <h1>Quantum GIS 1.8.0-Lisboa</h1>
  <div class="wins">
    <button aria-label="Minimizar"><svg viewBox="0 0 8 8"><path d="M2 5.500h4"/></svg></button>
    <button aria-label="Maximizar"><svg viewBox="0 0 8 8"><path d="M2.500 2.500h3v3h-3z"/></svg></button>
    <button aria-label="Cerrar"><svg viewBox="0 0 8 8"><path d="M2 2l4 4M6 2L2 6"/></svg></button>
  </div>
</div>

<nav class="menu">
  <a href="#"><u>A</u>rchivo</a><a href="#"><u>E</u>dición</a><a href="#"><u>V</u>er</a><a href="#"><u>C</u>apa</a><a href="#">Con<u>f</u>iguración</a><a href="#">Co<u>m</u>plementos</a><a href="#">Vect<u>o</u>rial</a><a href="#"><u>R</u>áster</a><a href="#">Base de <u>d</u>atos</a><a href="#"><u>C</u>adTools</a><a href="#">A<u>y</u>uda</a>
</nav>

<div class="bar main-bar">
  <i class="grip first"></i>
  <button aria-label="Nuevo"><svg class="ic"><use href="#new"/></svg></button>
  <button aria-label="Abrir"><svg class="ic"><use href="#open"/></svg></button>
  <button aria-label="Guardar"><svg class="ic"><use href="#save"/></svg></button>
  <button aria-label="Guardar como"><svg class="ic"><use href="#saveas"/></svg></button>
  <button aria-label="Nuevo diseñador"><svg class="ic"><use href="#printnew"/></svg></button>
  <button aria-label="Imprimir"><svg class="ic"><use href="#print"/></svg></button>
  <i class="grip"></i>
  <button aria-label="Añadir vectorial"><svg class="ic"><use href="#addvec"/></svg></button>
  <button aria-label="Añadir ráster"><svg class="ic"><use href="#addras"/></svg></button>
  <button aria-label="Añadir PostGIS"><svg class="ic"><use href="#addpg"/></svg></button>
  <button aria-label="Añadir SpatiaLite"><svg class="ic"><use href="#addsl"/></svg></button>
  <button aria-label="Añadir MSSQL"><svg class="ic"><use href="#addms"/></svg></button>
  <button aria-label="Añadir WMS"><svg class="ic"><use href="#addwms"/></svg></button>
  <button aria-label="Añadir WFS"><svg class="ic"><use href="#addwfs"/></svg></button>
  <button aria-label="Nueva capa"><svg class="ic"><use href="#newshp"/></svg></button>
  <button aria-label="Eliminar capa"><svg class="ic"><use href="#dellay"/></svg></button>
  <button aria-label="GPS"><svg class="ic"><use href="#gps"/></svg></button>
  <button aria-label="Añadir GPS"><svg class="ic"><use href="#addgps"/></svg></button>
  <i class="grip"></i>
  <button aria-label="Identificar"><svg class="ic"><use href="#ident"/></svg></button>
  <button aria-label="Acción"><svg class="ic"><use href="#gear"/></svg></button>
  <button class="more dim" aria-label="Más acciones"><svg><use href="#chev"/></svg></button>
  <button aria-label="Seleccionar"><svg class="ic"><use href="#select"/></svg></button>
  <button class="more" aria-label="Más selección"><svg><use href="#chev"/></svg></button>
  <button aria-label="Deseleccionar"><svg class="ic"><use href="#desel"/></svg></button>
  <button aria-label="Tabla"><svg class="ic"><use href="#table"/></svg></button>
  <button aria-label="Medir"><svg class="ic"><use href="#measure"/></svg></button>
  <button class="more" aria-label="Más medidas"><svg><use href="#chev"/></svg></button>
  <button aria-label="Avisos del mapa"><svg class="ic"><use href="#tip"/></svg></button>
  <button aria-label="Nuevo marcador"><svg class="ic"><use href="#bmnew"/></svg></button>
  <button aria-label="Marcadores"><svg class="ic"><use href="#bm"/></svg></button>
  <button aria-label="Anotación"><svg class="ic"><use href="#text"/></svg></button>
  <button class="more" aria-label="Más anotaciones"><svg><use href="#chev"/></svg></button>
  <i class="grip"></i>
  <button aria-label="Histograma"><svg class="ic"><use href="#g1"/></svg></button>
  <button aria-label="Estirar"><svg class="ic"><use href="#g2"/></svg></button>
  <button aria-label="Globo"><svg class="ic"><use href="#globe"/></svg></button>
  <button aria-label="Satélite"><svg class="ic"><use href="#sat"/></svg></button>
  <i class="grip"></i>
  <button aria-label="Adjuntos"><svg class="ic"><use href="#clip"/></svg></button>
  <button aria-label="¿Qué es esto?"><svg class="ic"><use href="#help"/></svg></button>
</div>

<div class="bar edit-bar">
  <i class="grip first"></i>
  <button aria-label="Editar"><svg class="ic"><use href="#pen"/></svg></button>
  <button aria-label="Guardar ediciones"><svg class="ic"><use href="#saveg"/></svg></button>
  <button aria-label="Añadir línea"><svg class="ic"><use href="#addln"/></svg></button>
  <button aria-label="Mover"><svg class="ic"><use href="#move"/></svg></button>
  <button aria-label="Nodos"><svg class="ic"><use href="#node"/></svg></button>
  <button aria-label="Borrar"><svg class="ic"><use href="#del"/></svg></button>
  <button aria-label="Cortar"><svg class="ic"><use href="#cut"/></svg></button>
  <button aria-label="Copiar"><svg class="ic"><use href="#copy"/></svg></button>
  <button aria-label="Pegar"><svg class="ic"><use href="#paste"/></svg></button>
  <button aria-label="Vértices"><svg class="ic"><use href="#vg"/></svg></button>
  <i class="grip"></i>
  <button class="on" aria-label="Desplazar"><svg class="ic"><use href="#hand"/></svg></button>
  <button aria-label="Desplazar a selección"><svg class="ic"><use href="#panfeat"/></svg></button>
  <button aria-label="Acercar"><svg class="ic"><use href="#zin"/></svg></button>
  <button aria-label="Alejar"><svg class="ic"><use href="#zout"/></svg></button>
  <button aria-label="Zoom 1:1"><svg class="ic"><use href="#z11"/></svg></button>
  <button aria-label="Zoom general"><svg class="ic"><use href="#zfull"/></svg></button>
  <button aria-label="Zoom a selección"><svg class="ic"><use href="#zsel"/></svg></button>
  <button aria-label="Zoom a capa"><svg class="ic"><use href="#zlay"/></svg></button>
  <button aria-label="Zoom anterior"><svg class="ic"><use href="#zprev"/></svg></button>
  <button aria-label="Zoom siguiente"><svg class="ic"><use href="#znext"/></svg></button>
  <button aria-label="Actualizar"><svg class="ic"><use href="#refresh"/></svg></button>
  <i class="grip"></i>
  <button aria-label="Deshacer"><svg class="ic"><use href="#undo"/></svg></button>
  <button aria-label="Rehacer"><svg class="ic"><use href="#redo"/></svg></button>
  <button aria-label="Simplificar"><svg class="ic"><use href="#simp"/></svg></button>
  <button aria-label="Añadir anillo"><svg class="ic"><use href="#ring"/></svg></button>
  <button aria-label="Añadir parte"><svg class="ic"><use href="#part"/></svg></button>
  <button aria-label="Borrar anillo"><svg class="ic"><use href="#delring"/></svg></button>
  <button aria-label="Borrar parte"><svg class="ic"><use href="#delring"/></svg></button>
  <button aria-label="Remodelar"><svg class="ic"><use href="#reshape"/></svg></button>
  <button aria-label="Dividir"><svg class="ic"><use href="#split"/></svg></button>
  <button aria-label="Combinar"><svg class="ic"><use href="#merge"/></svg></button>
  <button aria-label="Combinar atributos"><svg class="ic"><use href="#merge"/></svg></button>
  <button aria-label="Rotar"><svg class="ic"><use href="#rot"/></svg></button>
  <i class="grip"></i>
  <button aria-label="Interpolar"><svg class="ic"><use href="#ras1"/></svg></button>
  <button aria-label="Mapa de calor"><svg class="ic"><use href="#ras2"/></svg></button>
  <button aria-label="Terreno"><svg class="ic"><use href="#ras3"/></svg></button>
  <button class="more text" aria-label="Más herramientas">»</button>
</div>

<main class="work">
  <div class="side">
    <i class="grip-h"></i>
    <button aria-label="Abrir malla"><svg class="ic"><use href="#s-old"/></svg></button>
    <button aria-label="Nueva malla"><svg class="ic"><use href="#s-new"/></svg></button>
    <button aria-label="Cerrar malla"><svg class="ic"><use href="#s-del"/></svg></button>
    <i class="rule"></i>
    <button aria-label="Añadir vectorial GRASS"><svg class="ic"><use href="#s-addv"/></svg></button>
    <button aria-label="Añadir ráster GRASS"><svg class="ic"><use href="#s-addr"/></svg></button>
    <button aria-label="Nuevo vectorial GRASS"><svg class="ic"><use href="#s-star"/></svg></button>
    <button aria-label="Editar GRASS"><svg class="ic"><use href="#s-edit"/></svg></button>
    <button aria-label="Herramientas GRASS"><svg class="ic"><use href="#s-tool"/></svg></button>
    <button class="on" aria-label="Mostrar región"><svg class="ic"><use href="#s-reg"/></svg></button>
    <button aria-label="Editar región"><svg class="ic"><use href="#s-reg2"/></svg></button>
  </div>

  <section class="dock">
    <div class="dock-head"><h2>Capas</h2>
      <button aria-label="Desacoplar"><svg viewBox="0 0 7 7"><path d="M1.500 3h3v2.500h-3zM3 1.500h2.500V4"/></svg></button>
      <button aria-label="Cerrar panel"><svg viewBox="0 0 7 7"><path d="M1.500 1.500l4 4M5.500 1.500l-4 4"/></svg></button>
    </div>
    <ul class="tree">
      <li class="node"><svg class="tri"><use href="#tri"/></svg><input type="checkbox" id="l1" checked><svg class="kind"><use href="#pts"/></svg><label for="l1">points_dxf</label></li>
      <li class="sym"><svg viewBox="0 0 10 6"><circle cx="5" cy="3" r="2.200" fill="#dd9bdc" stroke="#3c2846" stroke-width=".8"/></svg></li>
      <li class="node sel"><svg class="tri"><use href="#tri"/></svg><input type="checkbox" id="l2" checked><svg class="kind"><use href="#lns"/></svg><label for="l2">frame_dxf</label></li>
      <li class="sym"><svg viewBox="0 0 10 6"><path d="M.5 3.500h9" stroke="#4f9aa8" stroke-width="1"/></svg></li>
    </ul>
    <div class="order"><input type="checkbox" id="ord" checked><label for="ord">Controlar orden de renderizado</label></div>
  </section>

  <section class="canvas" aria-label="Mapa">
    <svg viewBox="0 0 1674 867" preserveAspectRatio="xMinYMin slice">
      <!-- floor plan: each group covers one quarter of the sheet -->
      <g class="wall">
        <g transform="translate(285 0)">
          <path d="M97 21H990M97 35H990M97 49H660M97 64H660M33 85H657M115 35V138M211 64V259M284 35V138M303 35V138M352 64V280M442 64V280M472 35V138M490 35V138M511 237H538M536 237V283M511 283H538M47 160H93M33 85V766M47 142V283M47 292H103M47 292V615M47 446H103M106 295V374H981M303 292H348M346 292V521M300 357H348M300 390H345M328 374V462M404 374V527M396 444V527M514 374V479M550 374V475M106 436V424H150V442"/>
          <path class="heavy" d="M97 21V138M508 49V235M33 142H93M30 284H93M47 439H103"/>
        </g>
        <g transform="translate(825 0)">
          <path d="M120 18V82M450 18V85H530M172 35V62M304 35V62M400 35V62M52 64V212M70 85V237M85 85V245M85 180H115M85 227H115M68 237H90M529 85V766M444 95H515M514 95V756M444 320H515M441 325V374M444 417H515M180 352H213M214 298V418M181 358V374M287 307V374M287 300V286H295M281 286V300M355 321V374M129 358V415M129 406H158V419M10 374V474"/>
        </g>
        <g transform="translate(285 426)">
          <path d="M33 199H97V420M47 96H103M47 189H103M168 255V405M33 340H187M187 343V390M106 187V175H550M178 175V188M404 175V187M249 280V316M338 260V316M385 260V316M475 280V316M168 316H555M168 389H990M97 404H990M97 418H990M537 389V340H580M424 98V132M330 40H348M330 48H348M485 90V52H506M482 96H500M482 104H500"/>
          <path class="heavy" d="M33 255H168V405M97 199V420"/>
        </g>
        <g transform="translate(825 426)">
          <path d="M18 199H38M36 199V340M16 256H38M82 223V389M108 199V340M105 199H145M105 340H148V404M184 343V389M413 343V389M451 420V340H530M444 331H515M67 123L45 177M74 121L142 166"/>
          <path class="heavy" d="M16 256V405"/>
        </g>
      </g>
      <g class="leader">
        <path transform="translate(285 0)" d="M76 136L90 151M123 260L129 277M383 194L389 220M264 327L287 308M419 303L402 289M490 317L511 326M237 388L256 376M415 450L427 418"/>
        <path transform="translate(825 0)" d="M184 150L194 126M244 143L253 105M224 233L192 213M134 194L123 206M396 108L374 119M474 219L457 226M404 250L426 238M396 293L379 299M15 295L27 259M168 322L187 330M246 322L261 330M247 356L262 361M33 388L20 402M247 386L263 395M342 386L322 407M268 428L284 394M184 411L172 419M104 437L124 444M478 410L483 432"/>
        <path transform="translate(285 426)" d="M150 88L130 70M185 60L169 45M197 53L199 28M133 146L114 132M147 237L161 227M275 288L266 306M210 360L190 336M408 360L389 336M349 218L355 248M426 200L401 217M419 236L402 225M430 134L400 147M462 146L438 166M462 146L383 154M391 71L414 73M543 90L526 76M364 87L318 90M358 90V98"/>
        <path transform="translate(825 426)" d="M297 34L304 14M339 34V15M410 36L419 20M106 107L127 88M32 145L46 158M75 151L69 165M474 305L457 312"/>
      </g>
      <!-- leader tips -->
      <g class="tip">
        <path transform="translate(285 0)" d="M90 151h0M129 277h0M389 220h0M287 308h0M402 289h0M511 326h0M250 376h0M427 418h0"/>
        <path transform="translate(825 0)" d="M194 126h0M253 105h0M192 213h0M123 206h0M374 119h0M457 226h0M426 238h0M379 299h0M27 259h0M187 330h0M261 330h0M262 361h0M20 402h0M263 395h0M322 407h0M284 394h0M172 419h0M124 444h0"/>
        <path transform="translate(285 426)" d="M130 70h0M169 45h0M199 28h0M114 132h0M161 227h0M266 306h0M190 336h0M389 336h0M355 248h0M401 217h0M402 225h0M400 147h0M438 166h0M383 154h0M414 73h0M526 76h0M318 90h0M358 98h0"/>
        <path transform="translate(825 426)" d="M304 14h0M339 15h0M419 20h0M127 88h0M46 158h0M69 165h0M457 312h0M45 177h0M142 166h0"/>
      </g>
      <path class="joint" d="M382 21h0M400 35h0M382 49h0M382 64h0M496 64h0M569 35h0M588 35h0M637 64h0M727 64h0M757 35h0M775 35h0M793 49h0M318 87h0M318 142h0M332 142h0M318 284h0M332 284h0M332 294h0M392 374h0M613 374h0M689 374h0M631 357h0M631 390h0M798 374h0M835 374h0M945 21h0M945 35h0M945 49h0M945 64h0M997 35h0M1129 35h0M1225 35h0M1275 21h0M1275 35h0M877 64h0M895 88h0M910 88h0M910 180h0M910 227h0M1354 87h0M1339 97h0M1339 320h0M1339 417h0M1266 374h0M1180 374h0M1112 374h0M1006 374h0M954 374h0M1039 301h0M1039 352h0M318 625h0M318 681h0M332 522h0M392 601h0M463 601h0M613 601h0M689 601h0M835 601h0M534 742h0M625 742h0M670 742h0M760 742h0M453 742h0M382 830h0M382 844h0M453 830h0M472 815h0M841 815h0M841 830h0M907 815h0M973 815h0M973 830h0M1009 815h0M1275 815h0M1275 830h0M1275 844h0M861 682h0M861 625h0M933 625h0M933 766h0M1354 766h0M1339 756h0"/>
      <use href="#points" class="dot-edge"/>
      <use href="#points" class="dot"/>
      <path d="M1492 819v27l6-5 6 12 5-3-5-11h9z" fill="#fff" stroke="#222" stroke-width="3"/>
    </svg>
  </section>
</main>

<div class="bar cad-bar">
  <i class="grip first"></i>
  <button aria-label="Punto"><svg class="ic"><use href="#p2"/></svg></button>
  <button aria-label="Georreferenciar"><svg class="ic"><use href="#geo"/></svg></button>
  <button aria-label="Formulario"><svg class="ic"><use href="#form"/></svg></button>
  <i class="grip"></i>
  <button aria-label="CAD 1"><svg class="ic"><use href="#c1"/></svg></button><button aria-label="CAD 2"><svg class="ic"><use href="#c2"/></svg></button>
  <i class="rule"></i>
  <button aria-label="CAD 3"><svg class="ic"><use href="#c3"/></svg></button><button aria-label="CAD 4"><svg class="ic"><use href="#c4"/></svg></button>
  <i class="rule"></i>
  <button aria-label="CAD 5"><svg class="ic"><use href="#c5"/></svg></button><button aria-label="CAD 6"><svg class="ic"><use href="#c6"/></svg></button>
  <i class="rule"></i>
  <button aria-label="CAD 7"><svg class="ic"><use href="#c7"/></svg></button><button aria-label="CAD 8"><svg class="ic"><use href="#c8"/></svg></button>
  <i class="rule"></i>
  <button aria-label="CAD 9"><svg class="ic"><use href="#c3"/></svg></button><button aria-label="CAD 10"><svg class="ic"><use href="#c9"/></svg></button>
  <i class="rule"></i>
  <button aria-label="CAD 11"><svg class="ic"><use href="#c3"/></svg></button><button aria-label="CAD 12"><svg class="ic"><use href="#c10"/></svg></button>
  <i class="rule"></i>
  <button aria-label="CAD 13"><svg class="ic"><use href="#c11"/></svg></button><button aria-label="CAD 14"><svg class="ic"><use href="#c12"/></svg></button>
  <i class="rule"></i>
  <button aria-label="CAD 15"><svg class="ic"><use href="#c7"/></svg></button><button aria-label="CAD 16"><svg class="ic"><use href="#c13"/></svg></button>
  <i class="rule"></i>
  <button aria-label="CAD 17"><svg class="ic"><use href="#c14"/></svg></button><button aria-label="CAD 18"><svg class="ic"><use href="#c15"/></svg></button>
  <i class="rule"></i>
  <button aria-label="CAD 19"><svg class="ic"><use href="#k1"/></svg></button>
  <i class="rule"></i>
  <button aria-label="CAD 20"><svg class="ic"><use href="#k2"/></svg></button>
  <i class="rule"></i>
  <button aria-label="CAD 21"><svg class="ic"><use href="#k3"/></svg></button>
  <i class="rule"></i>
  <button aria-label="CAD 22"><svg class="ic"><use href="#k4"/></svg></button>
  <i class="rule"></i>
  <button aria-label="Consola"><svg class="ic"><use href="#shell"/></svg></button>
  <i class="grip"></i>
  <button aria-label="Herramientas GPS"><svg class="ic"><use href="#addgps"/></svg></button>
  <button aria-label="Topología"><svg class="ic"><use href="#vr"/></svg></button>
  <i class="grip"></i>
  <button aria-label="Etiquetar"><svg class="ic"><use href="#abc"/></svg></button>
  <button aria-label="Mover etiqueta"><svg class="ic"><use href="#lab1"/></svg></button>
  <button aria-label="Girar etiqueta"><svg class="ic"><use href="#lab2"/></svg></button>
  <button aria-label="Cambiar etiqueta"><svg class="ic"><use href="#lab3"/></svg></button>
</div>

<div class="status">
  <span class="extent">471.87,-823.96 : 2651.97,310.04</span>
  <svg class="ic small"><use href="#track"/></svg>
  <label for="coord">Coordenada:</label>
  <input type="text" id="coord" value="1898,-492">
  <label for="scale">Escala</label>
  <span class="combo"><select id="scale"><option>1:5396</option></select><svg><use href="#chev"/></svg></span>
  <svg class="ic small"><use href="#stop"/></svg>
  <span class="pair"><input type="checkbox" id="ren" checked><label for="ren">Representar</label></span>
  <span>EPSG:32619</span>
  <span class="pair"><svg class="ic small"><use href="#crs"/></svg><svg class="ic small"><use href="#warn"/></svg></span>
</div>

<footer class="tasks">
  <button class="desk" aria-label="Mostrar escritorio"><svg class="ic small"><use href="#desk"/></svg></button>
  <i class="grip"></i>
  <button class="task"><svg class="ic small"><use href="#krell"/></svg>gkrellm</button>
  <button class="task active"><svg class="ic small"><use href="#qgis"/></svg>Quantum GIS 1.8.0-Lis...</button>
  <div class="pager">
    <button class="now" aria-label="Área 1"><svg class="ic small"><use href="#chrome"/></svg></button>
    <button class="soft" aria-label="Área 2"><svg class="ic small"><use href="#qgis"/></svg></button>
    <button aria-label="Área 3"></button>
    <button aria-label="Área 4"></button>
  </div>
</footer>
</body>
</html>
```
FILE: styles.css
```css
* { box-sizing: border-box; }

html, body { height: 100%; }

body {
  margin: 0;
  display: flex;
  flex-direction: column;
  overflow: hidden;
  background: #edecea;
  color: #2e2e2e;
  font: 7px/10px "DejaVu Sans", sans-serif;
}

button, input, select { font: inherit; color: inherit; margin: 0; }
button { border: 0; padding: 0; background: none; display: flex; align-items: center; justify-content: center; }
h1, h2, ul { margin: 0; padding: 0; font: inherit; list-style: none; }
.defs { position: absolute; width: 0; height: 0; }

.ic { width: 14px; height: 14px; flex: none; overflow: visible; }
.ic.small { width: 11px; height: 11px; }

/* cad icon strokes */
.r, .b, .k { fill: none; stroke-width: 1; }
.rd, .bd, .kd { fill: none; stroke-width: 2; stroke-linecap: round; }
.r { stroke: #ee8080; }
.rd { stroke: #de6464; }
.b { stroke: #74a6c9; }
.bd { stroke: #5a8aac; }
.k { stroke: #c0bfbd; }
.kd { stroke: #b0afad; }

/* desktop panel */
.panel { flex: none; height: 14px; display: flex; align-items: center; padding: 0 1px 0 5px; }
.apart { margin-left: 4px; }
.panel .ic { height: 12px; }
.tray { margin-left: auto; display: flex; align-items: center; gap: 1px; }
.tray span, .tray time { margin-right: 2px; }

/* window title */
.title {
  flex: none; height: 14px; display: flex; align-items: center; padding: 0 2px 0 0;
  background: linear-gradient(#96b7e2, #789fd0);
  border-top: 1px solid #69809f; border-bottom: 1px solid #7c9ac2;
}
.title .ic { height: 10px; }
.title h1 { flex: 1; text-align: center; font-weight: bold; color: #e9f0f9; }
.wins { display: flex; gap: 2px; }
.wins button { width: 11px; height: 11px; border: 1px solid #6488ba; border-radius: 2px; background: #86a9d8; }
.wins svg { width: 8px; height: 8px; fill: none; stroke: #fff; stroke-width: 1; }

.menu { flex: none; height: 14px; display: flex; align-items: center; gap: 7px; padding: 0 3px; background: linear-gradient(#f0efed, #e8e7e5); }
.menu a { color: inherit; text-decoration: none; white-space: nowrap; }

/* tool bars */
.bar {
  flex: none; height: 22px; display: flex; align-items: center;
  background: linear-gradient(#f5f4f3, #e8e7e5);
  border-top: 1px solid #f8f8f7; border-bottom: 1px solid #d3d2cf;
}
.main-bar { padding-right: 20px; }
.cad-bar { height: 23px; padding-right: 12px; }
.bar button { flex: 1 1 20px; height: 20px; min-width: 0; }
.bar .more { flex: none; width: 11px; }
.more svg { width: 7px; height: 12px; }
.more.text { font-size: 10px; font-weight: bold; }
.dim { color: #999; }
.grip { flex: none; width: 7px; height: 10px; background: radial-gradient(circle, #c9c8c5 1px, transparent 1px) center / 3px 3px; background-clip: content-box; padding: 0 2px; }
.grip.first { width: 5px; padding: 0 1px; }
.rule { flex: none; width: 6px; height: 14px; background: linear-gradient(#cfcecb, #cfcecb) center / 1px 100% no-repeat; }
.bar .on, .side .on { background: #cbcac7; border: 1px solid #a5a4a1; border-radius: 2px; }

/* work area */
.work { flex: 1; min-height: 0; display: flex; }
.side { flex: none; width: 22px; display: flex; flex-direction: column; align-items: center; padding-top: 2px; }
.side button { width: 20px; height: 20px; flex: none; }
.grip-h { width: 10px; height: 7px; background: radial-gradient(circle, #c9c8c5 1px, transparent 1px) center / 3px 3px; background-clip: content-box; padding: 1px 0 3px; }
.side .rule { width: 14px; height: 6px; background: linear-gradient(#c4c3c0, #c4c3c0) center / 100% 1px no-repeat; }

.dock { flex: none; width: 184px; display: flex; flex-direction: column; }
.dock-head { height: 14px; padding: 2px 1px 0 2px; display: flex; align-items: center; gap: 2px; }
.dock-head h2 { flex: 1; }
.dock-head button { width: 7px; height: 7px; border: 1px solid #999; border-radius: 1px; }
.dock-head svg { width: 5px; height: 5px; fill: none; stroke: #666; stroke-width: 1; }
.tree { flex: 1; background: #fff; border: 1px solid #b7b6b3; font-family: "Liberation Sans", sans-serif; font-weight: bold; }
.node { height: 12px; display: flex; align-items: center; padding-left: 3px; }
.node label { padding-top: 1px; }
.sel { background: linear-gradient(#8db0dc, #7b9fcf); color: #fff; }
.tri { width: 8px; height: 8px; margin-right: 3px; }
.kind { width: 10px; height: 10px; margin: 0 4px 0 5px; }
.sym { height: 11px; padding-left: 24px; display: flex; align-items: center; }
.sym svg { width: 10px; height: 6px; overflow: visible; }
.order { height: 16px; display: flex; align-items: center; gap: 5px; padding: 2px 0 0 1px; }

input[type="checkbox"] { appearance: none; width: 8px; height: 8px; flex: none; border: 1px solid #888; background: #fff; display: grid; }
input[type="checkbox"]:checked::before { content: ""; background: #222; clip-path: polygon(0 50%, 20% 35%, 40% 60%, 85% 0, 100% 15%, 45% 100%); }

.canvas { flex: 1; min-width: 0; margin: 1px 0 1px 3px; background: #fff; border: 1px solid #b7b6b3; border-width: 1px 0 0 1px; }
.canvas svg { display: block; width: 100%; height: 100%; }
.wall path, .leader path { fill: none; stroke: #5aa2c0; stroke-width: 3; }
.wall .heavy { stroke: #3f8fb2; stroke-width: 4; }
.joint, .tip { fill: none; stroke: #3485aa; stroke-width: 6; stroke-linecap: round; }
.joint { stroke-width: 7; }
.dot, .dot-edge { fill: none; stroke-linecap: round; }
.dot-edge { stroke: #5b4463; stroke-width: 17; }
.dot { stroke: #de9fdc; stroke-width: 12; }

/* status bar */
.status { flex: none; height: 16px; display: flex; align-items: center; gap: 6px; padding: 0 1px 0 3px; font-family: "Liberation Sans", sans-serif; }
.status > * { flex: none; }
.status .extent { width: 38%; margin-right: -5px; }
.status input[type="text"] { flex: 1; min-width: 0; height: 10px; padding: 0; text-align: center; border: 1px solid #a3a29f; border-radius: 2px; background: #fff; }
.combo { display: grid; width: 54px; height: 10px; }
.combo > * { grid-area: 1 / 1; }
.combo select { appearance: none; width: 100%; height: 10px; padding: 0 1px; line-height: 8px; border: 1px solid #a3a29f; border-radius: 2px; background: linear-gradient(90deg, #fff 39px, #a3a29f 39px, #a3a29f 40px, #f1f0ee 40px); }
.combo svg { width: 8px; height: 10px; justify-self: end; margin-right: 2px; pointer-events: none; }
.pair { display: flex; align-items: center; gap: 4px; }

/* task bar */
.tasks { flex: none; height: 15px; display: flex; align-items: center; border-top: 1px solid #8b9cb3; padding-left: 1px; }
.desk { width: 12px; }
.task { width: 109px; height: 12px; margin-right: 1px; padding: 0 2px; gap: 3px; justify-content: flex-start; border: 1px solid #bdbcb9; border-radius: 2px; background: linear-gradient(#fff, #f1f0ee); white-space: nowrap; }
.task.active { background: #c9c8c5; border-color: #a3a29f; }
.pager { margin-left: auto; display: flex; gap: 1px; }
.pager button { width: 20px; height: 12px; background: #a9a8a5; }
.pager .now { background: #f2f1ef; border: 1px solid #444; }
.pager .soft { background: #cfe0f4; }
```
